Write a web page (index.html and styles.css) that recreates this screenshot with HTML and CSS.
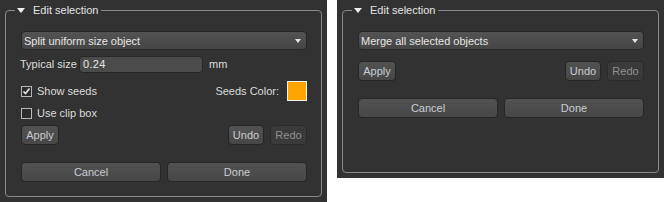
FILE: index.html
```html
<!DOCTYPE html>
<html>
<head>
<meta charset="utf-8">
<link rel="stylesheet" href="styles.css">
</head>
<body>
<div class="screen">
  <section class="panel panel-tall">
    <div class="group">
      <div class="group-title"><span class="caret"></span><span class="title-text">Edit selection</span></div>
      <div class="group-body">
        <div class="combo"><span class="combo-text">Split uniform size object</span><span class="combo-arrow"></span></div>
        <div class="row size-row">
          <span class="label size-label">Typical size</span>
          <div class="input">0.24</div>
          <span class="label unit">mm</span>
        </div>
        <div class="row seeds-row">
          <span class="check"><span class="box"><svg width="9" height="9" viewBox="0 0 9 9"><path d="M1.5 4.5 L3.5 6.5 L7.5 1.5" fill="none" stroke="#e8e8e8" stroke-width="1.6"/></svg></span><span class="label">Show seeds</span></span>
          <span class="spacer"></span>
          <span class="label">Seeds Color:</span>
          <span class="swatch"></span>
        </div>
        <div class="row clip-row">
          <span class="check"><span class="box"></span><span class="label">Use clip box</span></span>
        </div>
        <div class="row btn-row">
          <button class="btn btn-apply">Apply</button>
          <span class="spacer"></span>
          <button class="btn btn-undo">Undo</button>
          <button class="btn btn-redo" disabled>Redo</button>
        </div>
        <div class="row actions">
          <button class="btn wide">Cancel</button>
          <button class="btn wide">Done</button>
        </div>
      </div>
    </div>
  </section>
  <section class="panel panel-short">
    <div class="group">
      <div class="group-title"><span class="caret"></span><span class="title-text">Edit selection</span></div>
      <div class="group-body">
        <div class="combo"><span class="combo-text">Merge all selected objects</span><span class="combo-arrow"></span></div>
        <div class="row btn-row btn-row-merge">
          <button class="btn btn-apply">Apply</button>
          <span class="spacer"></span>
          <button class="btn btn-undo">Undo</button>
          <button class="btn btn-redo" disabled>Redo</button>
        </div>
        <div class="row actions">
          <button class="btn wide">Cancel</button>
          <button class="btn wide">Done</button>
        </div>
      </div>
    </div>
  </section>
</div>
</body>
</html>
```

FILE: styles.css
```css
* { box-sizing: border-box; }
html, body { margin: 0; padding: 0; background: #ffffff; }
body {
  font-family: "Liberation Sans", Arial, sans-serif;
  font-size: 11px;
  color: #dcdcdc;
}
.screen {
  display: flex;
  align-items: flex-start;
  gap: 10px;
}
.panel {
  width: 327px;
  background: #323232;
  padding: 10px 5px 5px 5px;
  display: flex;
  flex-direction: column;
}
.panel-tall { height: 202px; }
.panel-short { height: 178px; }
.group {
  flex: 1;
  border: 1px solid #8a8a8a;
  border-radius: 4px;
  display: flex;
  flex-direction: column;
}
.group-title {
  margin-top: -7px;
  margin-left: 9px;
  height: 13px;
  padding: 0 3px 0 2px;
  align-self: flex-start;
  background: #323232;
  display: flex;
  align-items: center;
  gap: 8px;
  color: #e4e4e4;
}
.caret {
  width: 0;
  height: 0;
  border-left: 4px solid transparent;
  border-right: 4px solid transparent;
  border-top: 5px solid #f0f0f0;
}
.title-text { line-height: 13px; }
.group-body {
  padding: 14px 14px 0 15px;
  display: flex;
  flex-direction: column;
}
.combo {
  height: 19px;
  border: 1px solid #262626;
  border-radius: 4px;
  background: linear-gradient(#535353, #454545);
  display: flex;
  align-items: center;
  padding: 0 5px 0 2px;
  color: #e6e6e6;
}
.combo-text { flex: 1; }
.combo-arrow {
  width: 0;
  height: 0;
  border-left: 3.5px solid transparent;
  border-right: 3.5px solid transparent;
  border-top: 4px solid #e8e8e8;
}
.row {
  display: flex;
  align-items: center;
}
.spacer { flex: 1; }
.label { line-height: 13px; white-space: nowrap; }
.size-row { margin-top: 6px; height: 17px; margin-left: -1px; }
.size-label { width: 59px; }
.input {
  width: 124px;
  height: 17px;
  border: 1px solid #262626;
  border-radius: 4px;
  background: #4b4b4b;
  padding: 0 3px;
  line-height: 15px;
  color: #e6e6e6;
  letter-spacing: 0.3px;
}
.unit { margin-left: 6px; }
.seeds-row { margin-top: 8px; height: 20px; }
.check { display: flex; align-items: center; gap: 5px; }
.box {
  width: 11px;
  height: 11px;
  border: 1px solid #b8b8b8;
  background: #2c2c2c;
  display: flex;
  align-items: center;
  justify-content: center;
}
.swatch {
  width: 20px;
  height: 20px;
  margin-left: 8px;
  background: #ffa500;
  border: 1px solid #f4f4f4;
}
.clip-row { margin-top: 2px; height: 20px; }
.btn-row { margin-top: 2px; height: 20px; gap: 6px; }
.btn-row-merge { margin-top: 11px; }
.btn {
  font-family: inherit;
  font-size: 11px;
  height: 20px;
  padding: 0;
  border: 1px solid #262626;
  border-radius: 4px;
  background: linear-gradient(#525252, #474747);
  color: #c9cdd2;
  line-height: 18px;
}
.btn-apply { width: 38px; }
.btn-undo { width: 36px; }
.btn-redo { width: 37px; }
.btn:disabled {
  background: #3a3a3a;
  color: #8f8f8f;
  border-color: #2a2a2a;
}
.actions { margin-top: 17px; gap: 6px; }
.wide { flex: 1; }
```
